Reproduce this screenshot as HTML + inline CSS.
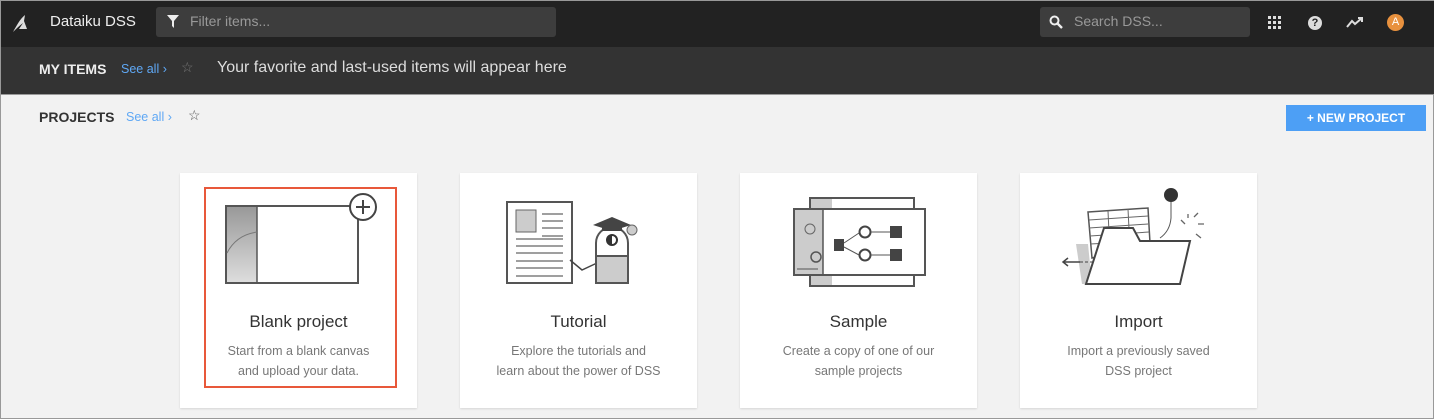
<!DOCTYPE html>
<html><head><style>
*{margin:0;padding:0;box-sizing:border-box}
body{width:1434px;height:419px;background:#f2f2f2;font-family:"Liberation Sans",sans-serif;position:relative;overflow:hidden;border:1px solid #999}
.top{position:absolute;left:0;top:0;width:1434px;height:46px;background:#222}
.sub{position:absolute;left:0;top:46px;width:1434px;height:48px;background:#333;border-bottom:1px solid #999}
.abs{position:absolute}
.card{position:absolute;top:172px;width:237px;height:235px;background:#fff;box-shadow:0 1px 2px rgba(0,0,0,.12);text-align:center}
.card h3{position:absolute;top:139px;width:100%;font-weight:normal;font-size:17px;color:#333}
.card p{position:absolute;top:168px;width:100%;font-size:12.5px;line-height:20px;color:#777}
.card svg{position:absolute;left:0;top:0}
</style></head><body>
<div class="top"></div>
<svg class="abs" style="left:10px;top:12px" width="20" height="20" viewBox="0 0 20 20"><path d="M2 19 C6 12 9 6 14 2 L13 8 L16 16 L8 16 L12 10 C8 13 5 16 2 19Z" fill="#ddd"/></svg>
<div class="abs" style="left:49px;top:12px;color:#eee;font-size:15px">Dataiku DSS</div>
<div class="abs" style="left:155px;top:6px;width:400px;height:30px;background:#3d3d3d;border-radius:3px"></div>
<svg class="abs" style="left:166px;top:14px" width="12" height="13" viewBox="0 0 12 13"><path d="M0 0H12L7 6V13L5 11V6Z" fill="#eee"/></svg>
<div class="abs" style="left:189px;top:12px;color:#999;font-size:14px">Filter items...</div>
<div class="abs" style="left:1039px;top:6px;width:210px;height:30px;background:#3d3d3d;border-radius:3px"></div>
<svg class="abs" style="left:1048px;top:14px" width="14" height="14" viewBox="0 0 14 14"><circle cx="5.5" cy="5.5" r="4" stroke="#eee" stroke-width="2" fill="none"/><path d="M8.5 8.5L13 13" stroke="#eee" stroke-width="2.4"/></svg>
<div class="abs" style="left:1073px;top:12px;color:#999;font-size:14px">Search DSS...</div>
<svg class="abs" style="left:1267px;top:15px" width="14" height="14"><g fill="#ddd"><rect x="0" y="0" width="3" height="3"/><rect x="5" y="0" width="3" height="3"/><rect x="10" y="0" width="3" height="3"/><rect x="0" y="5" width="3" height="3"/><rect x="5" y="5" width="3" height="3"/><rect x="10" y="5" width="3" height="3"/><rect x="0" y="10" width="3" height="3"/><rect x="5" y="10" width="3" height="3"/><rect x="10" y="10" width="3" height="3"/></g></svg>
<div class="abs" style="left:1307px;top:15px;width:14px;height:14px;border-radius:50%;background:#ddd;color:#222;font-size:11px;font-weight:bold;text-align:center;line-height:14px">?</div>
<svg class="abs" style="left:1345px;top:15px" width="18" height="12"><path d="M1 11L6 5L9 8L16 2M12 2H16V6" stroke="#ddd" stroke-width="2" fill="none"/></svg>
<div class="abs" style="left:1386px;top:13px;width:17px;height:17px;border-radius:50%;background:#e8913e;color:#fff;font-size:11px;text-align:center;line-height:17px">A</div>
<div class="sub"></div>
<div class="abs" style="left:38px;top:60px;color:#eee;font-size:14px;font-weight:bold">MY ITEMS</div>
<div class="abs" style="left:120px;top:61px;color:#5fa8f5;font-size:12.5px">See all ›</div>
<div class="abs" style="left:180px;top:58px;color:#777;font-size:14px">☆</div>
<div class="abs" style="left:216px;top:58px;color:#ddd;font-size:16px">Your favorite and last-used items will appear here</div>
<div class="abs" style="left:38px;top:108px;color:#333;font-size:14px;font-weight:bold">PROJECTS</div>
<div class="abs" style="left:125px;top:109px;color:#5fa8f5;font-size:12.5px">See all ›</div>
<div class="abs" style="left:187px;top:106px;color:#555;font-size:14px">☆</div>
<div class="abs" style="left:1285px;top:104px;width:140px;height:26px;background:#4d9ff5;color:#fff;font-size:12px;font-weight:bold;text-align:center;line-height:26px">+ NEW PROJECT</div>

<div class="card" style="left:179px">
<div class="abs" style="left:24px;top:14px;width:193px;height:201px;border:2px solid #e8583a"></div>
<svg width="237" height="140"><defs><linearGradient id="g" x1="0" y1="0" x2="0" y2="1"><stop offset="0" stop-color="#999"/><stop offset="1" stop-color="#ddd"/></linearGradient></defs>
<rect x="46" y="33" width="132" height="77" fill="#fff" stroke="#555" stroke-width="2"/><rect x="47" y="34" width="30" height="75" fill="url(#g)"/><line x1="77" y1="33" x2="77" y2="110" stroke="#555" stroke-width="1.5"/><path d="M47 80 Q56 62 77 59" stroke="#777" fill="none"/>
<circle cx="183" cy="34" r="13" fill="#fff" stroke="#444" stroke-width="2"/><path d="M176 34H190M183 27V41" stroke="#444" stroke-width="2"/></svg>
<h3>Blank project</h3><p>Start from a blank canvas<br>and upload your data.</p></div>

<div class="card" style="left:459px">
<svg width="237" height="140"><rect x="47" y="29" width="65" height="81" fill="#fff" stroke="#555" stroke-width="2"/><rect x="56" y="37" width="20" height="22" fill="#ccc" stroke="#666"/><g stroke="#666" stroke-width="1.3"><path d="M82 41H103M82 48H103M82 55H103M82 63H103M56 66H103M56 73H103M56 80H103M56 88H103M56 95H103M56 103H103"/></g>
<path d="M110 87L122 97L137 90" stroke="#444" fill="none" stroke-width="1.5"/><path d="M136 110V70a16 16 0 0 1 32 0V110Z" fill="#fff" stroke="#555" stroke-width="2"/><rect x="137" y="83" width="30" height="26" fill="#ccc"/><line x1="136" y1="83" x2="168" y2="83" stroke="#555" stroke-width="2"/><circle cx="152" cy="67" r="5" fill="#fff" stroke="#333" stroke-width="2"/><path d="M152 62a5 5 0 0 0 0 10Z" fill="#333"/><path d="M133 52L152 44L171 52L152 58Z" fill="#444"/><rect x="142" y="52" width="20" height="6" fill="#444"/><circle cx="172" cy="57" r="5" fill="#ccc" stroke="#666"/></svg>
<h3>Tutorial</h3><p>Explore the tutorials and<br>learn about the power of DSS</p></div>

<div class="card" style="left:739px">
<svg width="237" height="140"><rect x="70" y="25" width="104" height="88" fill="#fff" stroke="#555" stroke-width="2"/><rect x="71" y="26" width="21" height="86" fill="#ccc"/><rect x="54" y="36" width="131" height="66" fill="#fff" stroke="#555" stroke-width="2"/><rect x="55" y="37" width="28" height="64" fill="#ccc"/><line x1="83" y1="36" x2="83" y2="102" stroke="#555" stroke-width="1.5"/><circle cx="70" cy="56" r="5" fill="none" stroke="#666"/><circle cx="76" cy="84" r="5" fill="none" stroke="#555" stroke-width="1.5"/><path d="M57 96H78" stroke="#555"/>
<rect x="94" y="66" width="10" height="12" fill="#444"/><rect x="150" y="53" width="12" height="12" fill="#444"/><rect x="150" y="76" width="12" height="12" fill="#444"/><circle cx="125" cy="59" r="5.5" fill="#fff" stroke="#444" stroke-width="2"/><circle cx="125" cy="82" r="5.5" fill="#fff" stroke="#444" stroke-width="2"/><path d="M104 70L119 60M104 74L119 82M131 59H150M131 82H150" stroke="#555"/></svg>
<h3>Sample</h3><p>Create a copy of one of our<br>sample projects</p></div>

<div class="card" style="left:1019px">
<svg width="237" height="140"><circle cx="151" cy="22" r="7" fill="#333"/><path d="M151 29V45Q150 58 140 65" stroke="#555" fill="none"/><g stroke="#666" stroke-width="1.3"><path d="M161 47l4 4M168 41l0 4M178 40l-4 4M184 51h-6M176 61l5 4"/></g>
<path d="M68 39L128 35L130 70L72 85Z" fill="#fff" stroke="#555" stroke-width="1.5"/><g stroke="#666"><path d="M69 47L128 43M69 55L128 51M70 63L129 59M70 71L129 68M88 38L90 81M108 36L110 76"/></g>
<path d="M56 71H68L72 111H62Z" fill="#ccc"/><path d="M60 89H82" stroke="#444" stroke-dasharray="3 2"/><path d="M43 89H60M48 85L43 89L48 93" stroke="#444" fill="none" stroke-width="1.5"/>
<path d="M66 111L84 55H113L120 68H170L160 111Z" fill="#fff" stroke="#444" stroke-width="2"/></svg>
<h3>Import</h3><p>Import a previously saved<br>DSS project</p></div>
</body></html>
